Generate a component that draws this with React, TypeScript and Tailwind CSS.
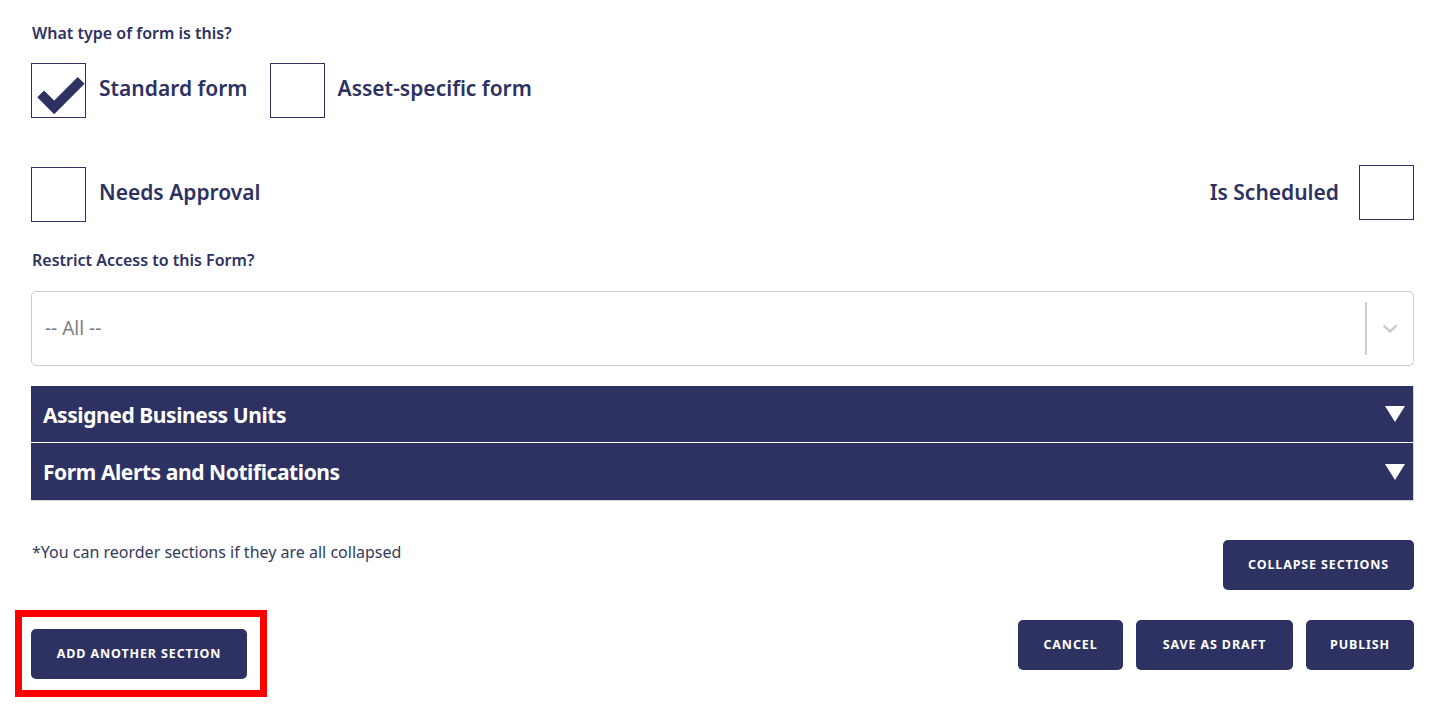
import { useState } from 'react';

const navy = '#2d3262';

function Box({ checked, onClick }: { checked?: boolean; onClick?: () => void }) {
  return (
    <button
      onClick={onClick}
      className="w-[55px] h-[55px] shrink-0 border border-[#2d3262] bg-white flex items-center justify-center"
    >
      {checked && (
        <svg width="55" height="55" viewBox="0 0 55 55">
          <polyline points="9,31 23,45 51,17" fill="none" stroke={navy} strokeWidth="10" strokeLinecap="butt" strokeLinejoin="miter" />
        </svg>
      )}
    </button>
  );
}

function Section({ title }: { title: string }) {
  return (
    <div className="h-[57px] bg-[#2d3262] flex items-center justify-between pl-[12px] pr-[8px] border-b border-white last:border-b-0">
      <span className="text-white text-[21px] font-bold tracking-[-0.02em] mt-[3px]">{title}</span>
      <svg width="20" height="16" viewBox="0 0 20 16">
        <polygon points="0,0 20,0 10,16" fill="white" />
      </svg>
    </div>
  );
}

function Btn({ children, className = '' }: { children: React.ReactNode; className?: string }) {
  return (
    <button
      className={`h-[50px] rounded-[5px] bg-[#2d3262] text-white text-[12.5px] font-bold tracking-[0.07em] uppercase ${className}`}
    >
      {children}
    </button>
  );
}

export default function App() {
  const [type, setType] = useState<'standard' | 'asset'>('standard');
  const [approval, setApproval] = useState(false);
  const [scheduled, setScheduled] = useState(false);

  return (
    <div className="w-full min-h-[713px] bg-white pl-[31px] pr-[30px] pt-[23px] text-[#2d3262]" style={{ fontFamily: '"Noto Sans", "Open Sans", sans-serif' }}>
      <div className="text-[16px] font-semibold leading-[20px] ml-[1px]">What type of form is this?</div>

      <div className="flex items-center mt-[20px]">
        <Box checked={type === 'standard'} onClick={() => setType('standard')} />
        <span className="ml-[13px] mb-[4px] text-[21px] font-semibold">Standard form</span>
        <div className="ml-[22px]">
          <Box checked={type === 'asset'} onClick={() => setType('asset')} />
        </div>
        <span className="ml-[13px] mb-[4px] text-[21px] font-semibold">Asset-specific form</span>
      </div>

      <div className="flex items-center justify-between mt-[47px] h-[57px]">
        <div className="flex items-center self-end">
          <Box checked={approval} onClick={() => setApproval(!approval)} />
          <span className="ml-[13px] mb-[4px] text-[21px] font-semibold">Needs Approval</span>
        </div>
        <div className="flex items-center self-start">
          <span className="mr-[20px] text-[21px] font-semibold">Is Scheduled</span>
          <Box checked={scheduled} onClick={() => setScheduled(!scheduled)} />
        </div>
      </div>

      <div className="mt-[28px] text-[16px] font-semibold leading-[20px] ml-[1px]">Restrict Access to this Form?</div>

      <div className="mt-[21px] h-[75px] border border-[#cccccc] rounded-[5px] flex items-center">
        <span className="flex-1 pl-[13px] text-[19px] text-[#808080]">-- All --</span>
        <div className="w-[2px] h-[53px] bg-[#cccccc]" />
        <div className="w-[46px] flex items-center justify-center">
          <svg width="16" height="9" viewBox="0 0 16 9">
            <polyline points="1.5,1.5 8,7.5 14.5,1.5" fill="none" stroke="#cccccc" strokeWidth="2.5" />
          </svg>
        </div>
      </div>

      <div className="mt-[20px] border-b border-r border-[#d4d4d4]">
        <Section title="Assigned Business Units" />
        <Section title="Form Alerts and Notifications" />
      </div>

      <div className="flex justify-between items-start mt-[39px]">
        <p className="text-[16px] text-[#343a5c] leading-[24px] ml-[1px]">*You can reorder sections if they are all collapsed</p>
        <Btn className="w-[191px]">Collapse Sections</Btn>
      </div>

      <div className="flex justify-between items-start mt-[20px]">
        <div className="-ml-[16px] border-[7px] border-[#ff0000] pt-[12px] pb-[11px] pl-[9px] pr-[13px]">
          <Btn className="w-[216px]">Add Another Section</Btn>
        </div>
        <div className="flex gap-[13px] mt-[10px]">
          <Btn className="w-[105px]">Cancel</Btn>
          <Btn className="w-[157px]">Save as Draft</Btn>
          <Btn className="w-[108px]">Publish</Btn>
        </div>
      </div>
    </div>
  );
}
